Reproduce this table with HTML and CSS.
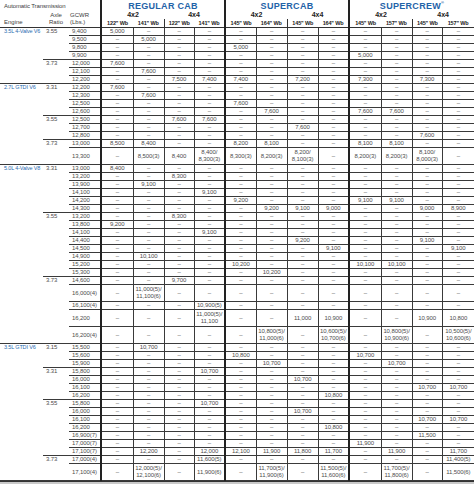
FILE: index.html
```html
<!DOCTYPE html>
<html>
<head>
<meta charset="utf-8">
<title>Towing</title>
<link rel="stylesheet" href="styles.css">
</head>
<body>
<table class="tow">
<colgroup>
<col class="c-eng"><col class="c-ax"><col class="c-gc">
<col class="w32"><col class="w31"><col class="w30"><col class="w31">
<col class="w31"><col class="w31"><col class="w31"><col class="w31">
<col class="w32"><col class="w31"><col class="w30"><col class="w32">
</colgroup>
<thead>
<tr class="h1"><th colspan="3" class="trans">Automatic Transmission</th><th colspan="4" class="cab g">REGULAR CAB</th><th colspan="4" class="cab g">SUPERCAB</th><th colspan="4" class="cab g">SUPERCREW<sup>®</sup></th></tr>
<tr class="h2"><th rowspan="2" class="eng-h">Engine</th><th rowspan="2" class="ax-h">Axle<br>Ratio</th><th rowspan="2" class="gc-h">GCWR<br>(Lbs.)</th><th colspan="2" class="drive g">4x2</th><th colspan="2" class="drive">4x4</th><th colspan="2" class="drive g">4x2</th><th colspan="2" class="drive">4x4</th><th colspan="2" class="drive g">4x2</th><th colspan="2" class="drive">4x4</th></tr>
<tr class="h3"><th class="wb g">122" Wb</th><th class="wb">141" Wb</th><th class="wb s">122" Wb</th><th class="wb">141" Wb</th><th class="wb g">145" Wb</th><th class="wb">164" Wb</th><th class="wb s">145" Wb</th><th class="wb">164" Wb</th><th class="wb g">145" Wb</th><th class="wb">157" Wb</th><th class="wb s">145" Wb</th><th class="wb">157" Wb</th></tr>
</thead>
<tbody>
<tr><td class="eng" rowspan="7">3.5L 4-Valve V6</td><td class="ax" rowspan="4">3.55</td><td>9,400</td><td>5,000</td><td>–</td><td>–</td><td>–</td><td>–</td><td>–</td><td>–</td><td>–</td><td>–</td><td>–</td><td>–</td><td>–</td></tr>
<tr><td>9,500</td><td>–</td><td>5,000</td><td>–</td><td>–</td><td>–</td><td>–</td><td>–</td><td>–</td><td>–</td><td>–</td><td>–</td><td>–</td></tr>
<tr><td>9,800</td><td>–</td><td>–</td><td>–</td><td>–</td><td>5,000</td><td>–</td><td>–</td><td>–</td><td>–</td><td>–</td><td>–</td><td>–</td></tr>
<tr><td>9,900</td><td>–</td><td>–</td><td>–</td><td>–</td><td>–</td><td>–</td><td>–</td><td>–</td><td>5,000</td><td>–</td><td>–</td><td>–</td></tr>
<tr><td class="ax" rowspan="3">3.73</td><td>12,000</td><td>7,600</td><td>–</td><td>–</td><td>–</td><td>–</td><td>–</td><td>–</td><td>–</td><td>–</td><td>–</td><td>–</td><td>–</td></tr>
<tr><td>12,100</td><td>–</td><td>7,600</td><td>–</td><td>–</td><td>–</td><td>–</td><td>–</td><td>–</td><td>–</td><td>–</td><td>–</td><td>–</td></tr>
<tr><td>12,200</td><td>–</td><td>–</td><td>7,500</td><td>7,400</td><td>7,400</td><td>–</td><td>7,200</td><td>–</td><td>7,300</td><td>–</td><td>7,300</td><td>–</td></tr>

<tr><td class="eng" rowspan="9">2.7L GTDI V6</td><td class="ax" rowspan="4">3.31</td><td>12,200</td><td>7,600</td><td>–</td><td>–</td><td>–</td><td>–</td><td>–</td><td>–</td><td>–</td><td>–</td><td>–</td><td>–</td><td>–</td></tr>
<tr><td>12,300</td><td>–</td><td>7,600</td><td>–</td><td>–</td><td>–</td><td>–</td><td>–</td><td>–</td><td>–</td><td>–</td><td>–</td><td>–</td></tr>
<tr><td>12,500</td><td>–</td><td>–</td><td>–</td><td>–</td><td>7,600</td><td>–</td><td>–</td><td>–</td><td>–</td><td>–</td><td>–</td><td>–</td></tr>
<tr><td>12,600</td><td>–</td><td>–</td><td>–</td><td>–</td><td>–</td><td>7,600</td><td>–</td><td>–</td><td>7,600</td><td>7,600</td><td>–</td><td>–</td></tr>
<tr><td class="ax" rowspan="3">3.55</td><td>12,500</td><td>–</td><td>–</td><td>7,600</td><td>7,600</td><td>–</td><td>–</td><td>–</td><td>–</td><td>–</td><td>–</td><td>–</td><td>–</td></tr>
<tr><td>12,700</td><td>–</td><td>–</td><td>–</td><td>–</td><td>–</td><td>–</td><td>7,600</td><td>–</td><td>–</td><td>–</td><td>–</td><td>–</td></tr>
<tr><td>12,800</td><td>–</td><td>–</td><td>–</td><td>–</td><td>–</td><td>–</td><td>–</td><td>–</td><td>–</td><td>–</td><td>7,600</td><td>–</td></tr>
<tr><td class="ax" rowspan="2">3.73</td><td>13,000</td><td>8,500</td><td>8,400</td><td>–</td><td>–</td><td>8,200</td><td>8,100</td><td>–</td><td>–</td><td>8,100</td><td>8,100</td><td>–</td><td>–</td></tr>
<tr class="d"><td>13,300</td><td>–</td><td>8,500(3)</td><td>8,400</td><td>8,400/<br>8,300(3)</td><td>8,300(3)</td><td>8,200(3)</td><td>8,200/<br>8,100(3)</td><td>–</td><td>8,200(3)</td><td>8,200(3)</td><td>8,100/<br>8,000(3)</td><td>–</td></tr>

<tr><td class="eng" rowspan="19">5.0L 4-Valve V8</td><td class="ax" rowspan="6">3.31</td><td>13,000</td><td>8,400</td><td>–</td><td>–</td><td>–</td><td>–</td><td>–</td><td>–</td><td>–</td><td>–</td><td>–</td><td>–</td><td>–</td></tr>
<tr><td>13,200</td><td>–</td><td>–</td><td>8,300</td><td>–</td><td>–</td><td>–</td><td>–</td><td>–</td><td>–</td><td>–</td><td>–</td><td>–</td></tr>
<tr><td>13,900</td><td>–</td><td>9,100</td><td>–</td><td>–</td><td>–</td><td>–</td><td>–</td><td>–</td><td>–</td><td>–</td><td>–</td><td>–</td></tr>
<tr><td>14,100</td><td>–</td><td>–</td><td>–</td><td>9,100</td><td>–</td><td>–</td><td>–</td><td>–</td><td>–</td><td>–</td><td>–</td><td>–</td></tr>
<tr><td>14,200</td><td>–</td><td>–</td><td>–</td><td>–</td><td>9,200</td><td>–</td><td>–</td><td>–</td><td>9,100</td><td>9,100</td><td>–</td><td>–</td></tr>
<tr><td>14,300</td><td>–</td><td>–</td><td>–</td><td>–</td><td>–</td><td>9,200</td><td>9,100</td><td>9,000</td><td>–</td><td>–</td><td>9,000</td><td>8,900</td></tr>
<tr><td class="ax" rowspan="8">3.55</td><td>13,200</td><td>–</td><td>–</td><td>8,300</td><td>–</td><td>–</td><td>–</td><td>–</td><td>–</td><td>–</td><td>–</td><td>–</td><td>–</td></tr>
<tr><td>13,800</td><td>9,200</td><td>–</td><td>–</td><td>–</td><td>–</td><td>–</td><td>–</td><td>–</td><td>–</td><td>–</td><td>–</td><td>–</td></tr>
<tr><td>14,100</td><td>–</td><td>–</td><td>–</td><td>9,100</td><td>–</td><td>–</td><td>–</td><td>–</td><td>–</td><td>–</td><td>–</td><td>–</td></tr>
<tr><td>14,400</td><td>–</td><td>–</td><td>–</td><td>–</td><td>–</td><td>–</td><td>9,200</td><td>–</td><td>–</td><td>–</td><td>9,100</td><td>–</td></tr>
<tr><td>14,500</td><td>–</td><td>–</td><td>–</td><td>–</td><td>–</td><td>–</td><td>–</td><td>9,100</td><td>–</td><td>–</td><td>–</td><td>9,100</td></tr>
<tr><td>14,900</td><td>–</td><td>10,100</td><td>–</td><td>–</td><td>–</td><td>–</td><td>–</td><td>–</td><td>–</td><td>–</td><td>–</td><td>–</td></tr>
<tr><td>15,200</td><td>–</td><td>–</td><td>–</td><td>–</td><td>10,200</td><td>–</td><td>–</td><td>–</td><td>10,100</td><td>10,100</td><td>–</td><td>–</td></tr>
<tr><td>15,300</td><td>–</td><td>–</td><td>–</td><td>–</td><td>–</td><td>10,200</td><td>–</td><td>–</td><td>–</td><td>–</td><td>–</td><td>–</td></tr>
<tr><td class="ax" rowspan="5">3.73</td><td>14,600</td><td>–</td><td>–</td><td>9,700</td><td>–</td><td>–</td><td>–</td><td>–</td><td>–</td><td>–</td><td>–</td><td>–</td><td>–</td></tr>
<tr class="d"><td>16,000(4)</td><td>–</td><td>11,000(5)/<br>11,100(6)</td><td>–</td><td>–</td><td>–</td><td>–</td><td>–</td><td>–</td><td>–</td><td>–</td><td>–</td><td>–</td></tr>
<tr><td>16,100(4)</td><td>–</td><td>–</td><td>–</td><td>10,900(5)</td><td>–</td><td>–</td><td>–</td><td>–</td><td>–</td><td>–</td><td>–</td><td>–</td></tr>
<tr class="d"><td>16,200</td><td>–</td><td>–</td><td>–</td><td>11,000(5)/<br>11,100</td><td>–</td><td>–</td><td>11,000</td><td>10,900</td><td>–</td><td>–</td><td>10,900</td><td>10,800</td></tr>
<tr class="d"><td>16,200(4)</td><td>–</td><td>–</td><td>–</td><td>–</td><td>–</td><td>10,800(5)/<br>11,000(6)</td><td>–</td><td>10,600(5)/<br>10,700(6)</td><td>–</td><td>10,800(5)/<br>10,900(6)</td><td>–</td><td>10,500(5)/<br>10,600(6)</td></tr>

<tr><td class="eng" rowspan="16">3.5L GTDI V6</td><td class="ax" rowspan="3">3.15</td><td>15,500</td><td>–</td><td>10,700</td><td>–</td><td>–</td><td>–</td><td>–</td><td>–</td><td>–</td><td>–</td><td>–</td><td>–</td><td>–</td></tr>
<tr><td>15,600</td><td>–</td><td>–</td><td>–</td><td>–</td><td>10,800</td><td>–</td><td>–</td><td>–</td><td>10,700</td><td>–</td><td>–</td><td>–</td></tr>
<tr><td>15,900</td><td>–</td><td>–</td><td>–</td><td>–</td><td>–</td><td>10,700</td><td>–</td><td>–</td><td>–</td><td>10,700</td><td>–</td><td>–</td></tr>
<tr><td class="ax" rowspan="4">3.31</td><td>15,800</td><td>–</td><td>–</td><td>–</td><td>10,700</td><td>–</td><td>–</td><td>–</td><td>–</td><td>–</td><td>–</td><td>–</td><td>–</td></tr>
<tr><td>16,000</td><td>–</td><td>–</td><td>–</td><td>–</td><td>–</td><td>–</td><td>10,700</td><td>–</td><td>–</td><td>–</td><td>–</td><td>–</td></tr>
<tr><td>16,100</td><td>–</td><td>–</td><td>–</td><td>–</td><td>–</td><td>–</td><td>–</td><td>–</td><td>–</td><td>–</td><td>10,700</td><td>10,700</td></tr>
<tr><td>16,200</td><td>–</td><td>–</td><td>–</td><td>–</td><td>–</td><td>–</td><td>–</td><td>10,800</td><td>–</td><td>–</td><td>–</td><td>–</td></tr>
<tr><td class="ax" rowspan="7">3.55</td><td>15,800</td><td>–</td><td>–</td><td>–</td><td>10,700</td><td>–</td><td>–</td><td>–</td><td>–</td><td>–</td><td>–</td><td>–</td><td>–</td></tr>
<tr><td>16,000</td><td>–</td><td>–</td><td>–</td><td>–</td><td>–</td><td>–</td><td>10,700</td><td>–</td><td>–</td><td>–</td><td>–</td><td>–</td></tr>
<tr><td>16,100</td><td>–</td><td>–</td><td>–</td><td>–</td><td>–</td><td>–</td><td>–</td><td>–</td><td>–</td><td>–</td><td>10,700</td><td>10,700</td></tr>
<tr><td>16,200</td><td>–</td><td>–</td><td>–</td><td>–</td><td>–</td><td>–</td><td>–</td><td>10,800</td><td>–</td><td>–</td><td>–</td><td>–</td></tr>
<tr><td>16,900(7)</td><td>–</td><td>–</td><td>–</td><td>–</td><td>–</td><td>–</td><td>–</td><td>–</td><td>–</td><td>–</td><td>11,500</td><td>–</td></tr>
<tr><td>17,000(7)</td><td>–</td><td>–</td><td>–</td><td>–</td><td>–</td><td>–</td><td>–</td><td>–</td><td>11,900</td><td>–</td><td>–</td><td>–</td></tr>
<tr><td>17,100(7)</td><td>–</td><td>12,200</td><td>–</td><td>12,000</td><td>12,100</td><td>11,900</td><td>11,800</td><td>11,700</td><td>–</td><td>11,900</td><td>–</td><td>11,700</td></tr>
<tr><td class="ax" rowspan="2">3.73</td><td>17,000(4)</td><td>–</td><td>–</td><td>–</td><td>11,600(5)</td><td>–</td><td>–</td><td>–</td><td>–</td><td>–</td><td>–</td><td>–</td><td>11,400(5)</td></tr>
<tr class="d"><td>17,100(4)</td><td>–</td><td>12,000(5)/<br>12,100(6)</td><td>–</td><td>11,900(6)</td><td>–</td><td>11,700(5)/<br>11,900(6)</td><td>–</td><td>11,500(5)/<br>11,600(6)</td><td>–</td><td>11,700(5)/<br>11,800(6)</td><td>–</td><td>11,500(6)</td></tr>
</tbody>
</table>
<div class="foot"></div>
</body>
</html>
```

FILE: styles.css
```css
html, body {
  margin: 0;
  padding: 0;
  background: #ffffff;
}

.tow {
  border-collapse: collapse;
  table-layout: fixed;
  width: 474px;
  font-family: "Liberation Sans", Arial, sans-serif;
  color: #4d4d4d;
}

.c-eng { width: 43px; }
.c-ax { width: 26px; }
.c-gc { width: 32px; }
.w30 { width: 30px; }
.w31 { width: 31px; }
.w32 { width: 32px; }

/* header */
.tow th {
  padding: 0;
  font-weight: normal;
  white-space: nowrap;
}

.h1 th { height: 11px; }
.h2 th { height: 8px; }
.h3 th { height: 8px; border-bottom: 1px solid #333; }

.trans {
  text-align: left;
  padding-left: 4px !important;
  font-size: 6px;
  letter-spacing: -0.1px;
  color: #3c3c3c;
  vertical-align: middle;
}

.cab {
  font-weight: bold !important;
  font-size: 9px;
  letter-spacing: 0.3px;
  color: #1f63a8;
  vertical-align: middle;
}

.cab sup {
  font-size: 4px;
  vertical-align: top;
  line-height: 4px;
}

.eng-h, .ax-h, .gc-h {
  font-size: 6px;
  line-height: 7px;
  color: #3c3c3c;
  vertical-align: bottom;
  border-bottom: 1px solid #333;
  padding-bottom: 1px !important;
}

.eng-h { text-align: left; padding-left: 4px !important; }
.ax-h { text-align: center; }
.gc-h { text-align: left; padding-left: 1px !important; }

.drive {
  font-weight: bold !important;
  font-size: 7px;
  line-height: 8px;
  color: #222;
  vertical-align: bottom;
}

.wb {
  font-weight: bold !important;
  font-size: 5.5px;
  letter-spacing: -0.15px;
  line-height: 8px;
  color: #222;
}

.tow th.g { border-left: 2px solid #222; }
.tow th.s { border-left: 1px solid #333; }

/* body */
.tow td {
  height: 7px;
  padding: 0;
  font-size: 6px;
  letter-spacing: -0.1px;
  line-height: 7px;
  text-align: center;
  vertical-align: middle;
  white-space: nowrap;
  overflow: hidden;
  border-bottom: 1px solid #3a3a3a;
  border-left: 1px solid #3a3a3a;
}

.tow tr.d td { height: 16px; }

.tow td:nth-last-child(12),
.tow td:nth-last-child(8),
.tow td:nth-last-child(4) {
  border-left: 2px solid #222;
}

.tow td:nth-last-child(13) {
  text-align: left;
  padding-left: 3px;
  border-left: none;
}

.tow td.eng {
  text-align: left;
  vertical-align: top;
  padding-left: 4px;
  color: #2a6cb0;
  border-left: none;
  font-size: 5.5px;
  letter-spacing: -0.15px;
}

.tow td.ax {
  text-align: left;
  vertical-align: top;
  padding-left: 3px;
  border-left: none;
}

.foot {
  height: 6px;
  background: #c9c9c9;
  border-top: 1px solid #333;
}
```
